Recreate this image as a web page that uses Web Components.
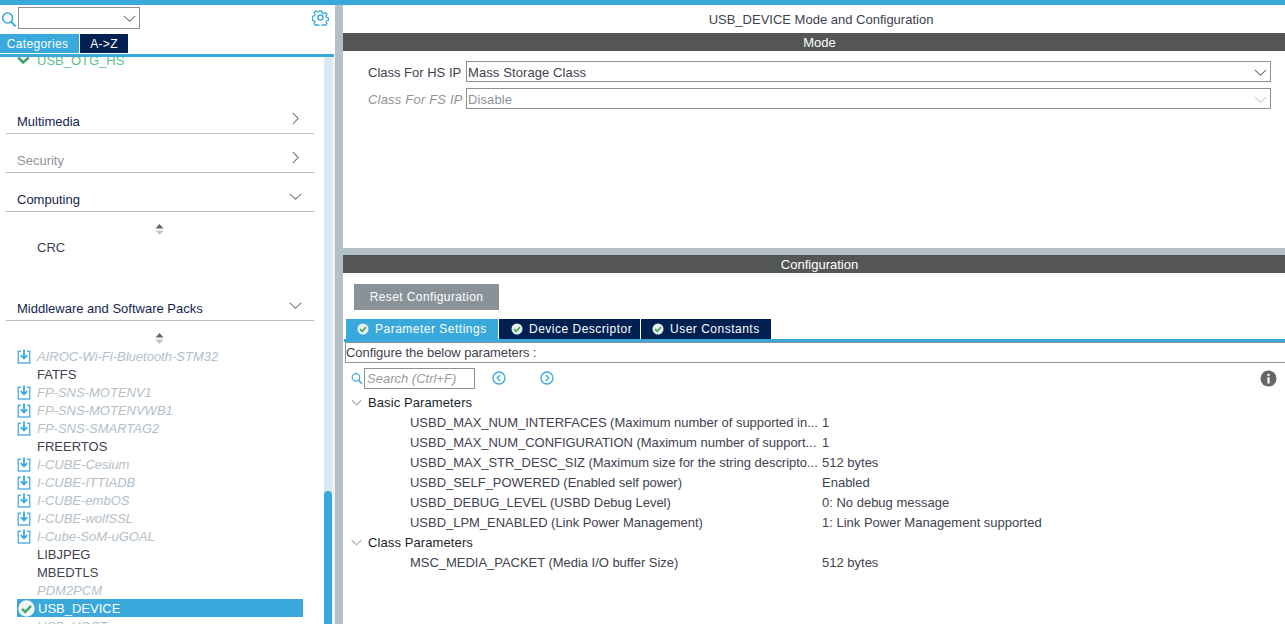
<!DOCTYPE html>
<html><head><meta charset="utf-8"><style>
html,body{margin:0;padding:0;height:624px;overflow:hidden;background:#fff;font:13px "Liberation Sans",Arial,sans-serif;color:#39404a}
</style></head><body>
<cube-app>
  <side-panel slot="left">
    <tree-item kind="ok-green" style="margin-top:-6px">USB_OTG_HS</tree-item>
    <cat-head style="margin-top:41px" state="closed">Multimedia</cat-head>
    <cat-head state="closed" disabled>Security</cat-head>
    <cat-head state="open">Computing</cat-head>
    <sort-mark></sort-mark>
    <tree-item style="margin-top:-2px">CRC</tree-item>
    <cat-head style="margin-top:41px" state="open">Middleware and Software Packs</cat-head>
    <sort-mark></sort-mark>
    <tree-item kind="pack" disabled style="margin-top:-2px">AIROC-Wi-Fi-Bluetooth-STM32</tree-item>
    <tree-item>FATFS</tree-item>
    <tree-item kind="pack" disabled>FP-SNS-MOTENV1</tree-item>
    <tree-item kind="pack" disabled>FP-SNS-MOTENVWB1</tree-item>
    <tree-item kind="pack" disabled>FP-SNS-SMARTAG2</tree-item>
    <tree-item>FREERTOS</tree-item>
    <tree-item kind="pack" disabled>I-CUBE-Cesium</tree-item>
    <tree-item kind="pack" disabled>I-CUBE-ITTIADB</tree-item>
    <tree-item kind="pack" disabled>I-CUBE-embOS</tree-item>
    <tree-item kind="pack" disabled>I-CUBE-wolfSSL</tree-item>
    <tree-item kind="pack" disabled>I-Cube-SoM-uGOAL</tree-item>
    <tree-item>LIBJPEG</tree-item>
    <tree-item>MBEDTLS</tree-item>
    <tree-item disabled>PDM2PCM</tree-item>
    <tree-item kind="selected">USB_DEVICE</tree-item>
    <tree-item disabled plain>USB_HOST</tree-item>
  </side-panel>
  <main-panel slot="right"></main-panel>
</cube-app>
<script>
const I={
 search:c=>`<svg width="16" height="17" viewBox="0 0 16 17" fill="none" stroke="${c}" stroke-width="1.6"><circle cx="6.6" cy="7" r="5"/><path d="M10.2 10.8l4.4 4.6" stroke-width="2"/></svg>`,
 chevD:(c='#7b7f84',w=13)=>`<svg width="${w}" height="7" viewBox="0 0 13 7" fill="none" stroke="${c}" stroke-width="1.1"><path d="M.8.8l5.7 5.4L12.2.8"/></svg>`,
 chevR:`<svg width="7" height="13" viewBox="0 0 7 13" fill="none" stroke="#7b7f84" stroke-width="1.1"><path d="M.8.8l5.4 5.7L.8 12.2"/></svg>`,
 gear:`<svg width="17" height="17" viewBox="0 0 24 24" fill="none" stroke="#39a9dc" stroke-width="2"><circle cx="12" cy="12" r="3.6"/><path stroke-linejoin="round" d="M10 1.8h4l.6 3 2.2 1 2.6-1.6 2.8 2.8-1.6 2.6.9 2.2 3 .6v4l-3 .7-.9 2.2 1.6 2.6-2.8 2.8-2.6-1.6-2.2.9-.6 3h-4l-.6-3-2.2-.9-2.6 1.6-2.8-2.8 1.6-2.6-.9-2.2-3-.6V10l3-.7.9-2.2-1.6-2.6 2.8-2.8 2.6 1.6 2.2-.9z" transform="translate(12 12) scale(.9) translate(-12 -12)"/></svg>`,
 tabOk:`<svg width="12" height="12" viewBox="0 0 12 12"><circle cx="6" cy="6" r="5.5" fill="#e9f3ee"/><path d="M3 6.1l2.2 2.2L9 4.2" fill="none" stroke="#3fa65f" stroke-width="1.7"/></svg>`,
 pack:`<svg width="14" height="15" viewBox="0 0 14 15" fill="none" stroke="#5db3e2" stroke-width="1.5"><path d="M4 2.2H1.3v11.9h11.4V2.2H10"/><path d="M7 .5v8.5M3.8 6.2L7 9.4l3.2-3.2" stroke="#39a9dc" stroke-width="1.8"/></svg>`,
 okGreen:`<svg width="13" height="9" viewBox="0 0 13 9"><path d="M1.2 1.5l5 5 5.5-5" fill="none" stroke="#3fa66a" stroke-width="2.6"/></svg>`,
 okSel:`<svg width="17" height="17" viewBox="0 0 17 17"><circle cx="8.5" cy="8.5" r="8.2" fill="#f1f6f3"/><path d="M4 8.8l3.2 3.2L13 5.9" fill="none" stroke="#3fa65f" stroke-width="2.3"/></svg>`,
 nav:d=>`<svg width="14" height="14" viewBox="0 0 14 14" fill="none" stroke="#39a9dc" stroke-width="1.3"><circle cx="7" cy="7" r="6"/><path d="${d}"/></svg>`,
 info:`<svg width="17" height="17" viewBox="0 0 17 17"><circle cx="8.5" cy="8.5" r="8" fill="#666"/><rect x="7.4" y="7.2" width="2.2" height="6.3" fill="#fff"/><rect x="7.4" y="3.8" width="2.2" height="2.1" fill="#fff"/></svg>`
};
function def(name,css,html){
  customElements.define(name,class extends HTMLElement{
    connectedCallback(){
      if(this.shadowRoot)return;
      const r=this.attachShadow({mode:'open'});
      r.innerHTML=`<style>${css}</style>`+(typeof html==='function'?html(this):html);
    }
  });
}
def('cube-app',`:host{display:flex;flex-direction:column;height:624px;overflow:hidden}
.top{height:5px;background:#39a9dc;flex:none}
.b{display:flex;flex:1;min-height:0}
.sep{width:8px;background:#b4c0c8;flex:none}
::slotted(side-panel){flex:none}
::slotted(main-panel){flex:1;min-width:0}`,
`<div class="top"></div><div class="b"><slot name="left"></slot><div class="sep"></div><slot name="right"></slot></div>`);

def('side-panel',`:host{display:flex;flex-direction:column;width:335px;height:619px}
.s{display:flex;align-items:center;height:29px;flex:none}
.mag{width:18px;display:flex;padding-left:1px;box-sizing:border-box}
.sel{width:122px;height:22px;box-sizing:border-box;border:1px solid #8e9296;display:flex;align-items:center;justify-content:flex-end;padding-right:3px;margin-top:-3px}
.gear{margin-left:172px;display:flex;margin-top:-4px}
.tabs{display:flex;height:20px;flex:none;gap:1px}
.t{color:#fff;font-size:12px;letter-spacing:.35px;display:flex;align-items:center;justify-content:center;height:19px}
.t1{width:75px;padding-right:4px;background:#39a9dc}.t2{width:48px;background:#002052}
.line{height:3px;background:#39a9dc;flex:none;margin-right:1px}
.c{display:flex;flex:1;min-height:0}
.l{width:324px;flex:none;overflow:hidden;padding-left:6px;box-sizing:border-box;padding-right:10px}
.track{width:8px;background:#d8e8f5;flex:none;display:flex;flex-direction:column}
.gap{height:434px;flex:none}
.thumb{flex:1;background:#39a9dc;border-radius:4px 4px 0 0}
.rest{flex:1;background:#f2f2f2}`,
`<div class="s"><span class="mag">${I.search('#39a9dc')}</span><div class="sel">${I.chevD('#7b7f84',13)}</div><span class="gear">${I.gear}</span></div>
<div class="tabs"><div class="t t1">Categories</div><div class="t t2">A-&gt;Z</div></div><div class="line"></div>
<div class="c"><div class="l"><slot></slot></div><div class="track"><div class="gap"></div><div class="thumb"></div></div><div class="rest"></div></div>`);

def('cat-head',`:host{display:flex;align-items:center;justify-content:space-between;height:24px;margin-top:15px;box-sizing:border-box;border-bottom:1px solid #b4c0c8;padding:0 12px 0 11px;color:#14264f;font-size:13px}
:host([disabled]){color:#8f9499}
.i{display:flex;width:13px;justify-content:center;margin-top:-6px}`,
e=>`<slot></slot><span class="i">${e.getAttribute('state')==='open'?I.chevD():I.chevR}</span>`);

def('sort-mark',`:host{display:flex;justify-content:center;height:16px;padding-top:12px;width:306px}`,
`<svg width="9" height="11" viewBox="0 0 9 11"><path d="M4.5 0L8.5 4.5H.5z" fill="#666"/><path d="M4.5 11L8.5 6.5H.5z" fill="#c4c4c4"/></svg>`);

def('tree-item',`:host{display:flex;align-items:center;height:18px;color:#3f4250;font-size:13px;margin-left:11px;width:286px;white-space:nowrap}
:host([disabled]){color:#b4c0c8;font-style:italic}
:host([kind=ok-green]){color:#5cc28a}
:host([kind=selected]){background:#39a9dc;color:#fff}
.i{width:20px;flex:none;display:flex;align-items:center}
.si{width:21px;padding-left:1px;box-sizing:border-box}`,
e=>{const k=e.getAttribute('kind');const ic=k==='pack'?I.pack:k==='ok-green'?I.okGreen:k==='selected'?I.okSel:'';
return `<span class="i ${k==='selected'?'si':''}">${ic}</span><slot></slot>`});

def('x-select',`:host{display:flex;align-items:center;justify-content:space-between;box-sizing:border-box;height:21px;flex:1;border:1px solid #8e9296;padding:1px 3px 0 1px;color:#3f4250;letter-spacing:.1px}
:host([disabled]){color:#8f9499}`,
e=>`<slot></slot>${I.chevD(e.hasAttribute('disabled')?'#cfd2d5':'#6f7478',13)}`);

def('section-bar',`:host{display:flex;justify-content:center;align-items:center;height:18px;background:#545655;color:#fff;font-size:13px;flex:none;padding-left:11px}`,`<slot></slot>`);

def('cfg-tab',`:host{display:flex;align-items:center;height:20px;box-sizing:border-box;padding-left:11px;gap:6px;background:#002052;color:#fff;letter-spacing:.5px;font-size:12px;flex:none}
:host([active]){background:#39a9dc}
span{display:flex;margin-top:-1px}`,`<span>${I.tabOk}</span><slot></slot>`);

def('param-row',`:host{display:flex;height:20px;align-items:center;padding-left:67px;color:#3f4250;white-space:nowrap}
.k{width:412px;flex:none;letter-spacing:-.03px}`,
e=>`<span class="k"><slot></slot></span><span class="v">${e.getAttribute('value')}</span>`);

def('group-row',`:host{display:flex;height:20px;align-items:center;padding-left:8px;color:#1b1f2a;letter-spacing:.1px}
span{width:17px;display:flex}`,`<span>${I.chevD('#6f7478',11)}</span><slot></slot>`);

def('main-panel',`:host{display:flex;flex-direction:column;height:619px;font-size:13px}
.title{height:28px;flex:none;display:flex;align-items:center;justify-content:center;color:#3f4250;font-size:13px;padding-left:14px}
.mode{height:197px;flex:none;padding-top:10px;box-sizing:border-box}
.r{display:flex;align-items:center;height:21px;padding:0 14px 0 25px;margin-bottom:6px}
.lb{width:98px;flex:none;color:#3f4250;padding-top:1px}
.dis{color:#8f9499;font-style:italic;letter-spacing:.2px}
.gap{height:7px;background:#b4c0c8;flex:none}
.btnw{padding:11px 0 0 11px;height:46px;box-sizing:border-box;flex:none}
.btn{width:145px;height:26px;background:#8a9299;color:#fff;display:flex;align-items:center;justify-content:center;letter-spacing:.4px;font-size:12px}
.tabs{display:flex;padding-left:3px;gap:1px;flex:none}
.bl{height:3px;background:#39a9dc;margin-left:1px;flex:none}
.conf{height:19px;border:solid #8e9296;border-width:1px 0 1px 1px;margin-left:2px;display:flex;align-items:center;color:#3f4250;flex:none;letter-spacing:-.05px}
.sr{display:flex;align-items:center;height:28px;padding-left:8px;flex:none;margin-top:1px}
.m{width:13px;display:flex}
.in{width:111px;height:21px;box-sizing:border-box;border:1px solid #8e9296;padding-left:2px;color:#9a9ea3;font-style:italic;display:flex;align-items:center}
.n{display:flex}
.info{margin-left:auto;margin-right:8px;display:flex}
.tree{flex:1}`,
`<div class="title">USB_DEVICE Mode and Configuration</div>
<section-bar>Mode</section-bar>
<div class="mode">
 <div class="r"><span class="lb">Class For HS IP</span><x-select>Mass Storage Class</x-select></div>
 <div class="r"><span class="lb dis">Class For FS IP</span><x-select disabled>Disable</x-select></div>
</div>
<div class="gap"></div>
<section-bar>Configuration</section-bar>
<div class="btnw"><div class="btn">Reset Configuration</div></div>
<div class="tabs"><cfg-tab active style="width:152px">Parameter Settings</cfg-tab><cfg-tab style="width:141px;padding-left:12px">Device Descriptor</cfg-tab><cfg-tab style="width:130px">User Constants</cfg-tab></div>
<div class="bl"></div>
<div class="conf">Configure the below parameters :</div>
<div class="sr"><span class="m">${I.search('#39a9dc').replace('width="16" height="17"','width="12" height="13"')}</span><div class="in">Search (Ctrl+F)</div>
<span class="n" style="margin-left:17px">${I.nav('M8.2 4L5.2 7l3 3')}</span><span class="n" style="margin-left:34px">${I.nav('M5.8 4l3 3-3 3')}</span><span class="info">${I.info}</span></div>
<div class="tree">
<group-row>Basic Parameters</group-row>
<param-row value="1">USBD_MAX_NUM_INTERFACES (Maximum number of supported in...</param-row>
<param-row value="1">USBD_MAX_NUM_CONFIGURATION (Maximum number of support...</param-row>
<param-row value="512 bytes">USBD_MAX_STR_DESC_SIZ (Maximum size for the string descripto...</param-row>
<param-row value="Enabled">USBD_SELF_POWERED (Enabled self power)</param-row>
<param-row value="0: No debug message">USBD_DEBUG_LEVEL (USBD Debug Level)</param-row>
<param-row value="1: Link Power Management supported">USBD_LPM_ENABLED (Link Power Management)</param-row>
<group-row>Class Parameters</group-row>
<param-row value="512 bytes">MSC_MEDIA_PACKET (Media I/O buffer Size)</param-row>
</div>`);
</script>
</body></html>
